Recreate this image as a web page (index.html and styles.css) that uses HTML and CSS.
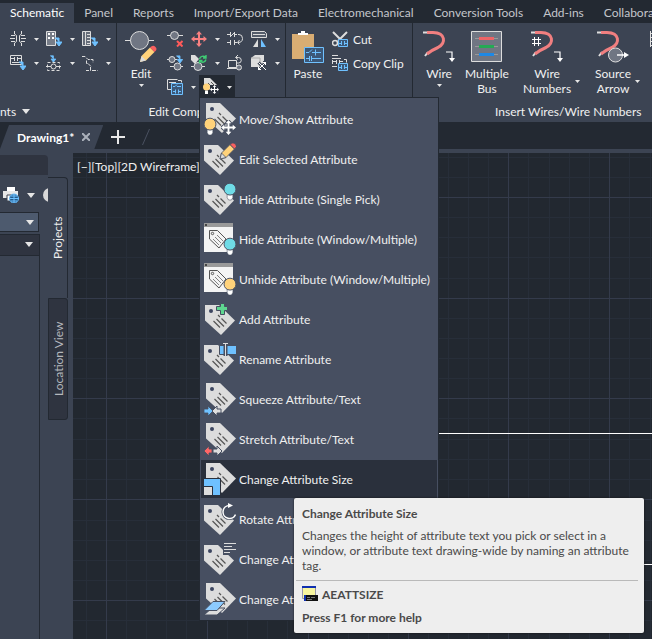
FILE: index.html
```html
<!doctype html>
<html lang="en">
<head>
	<meta charset="UTF-8">
	<title>Schematic</title>
	<link rel="stylesheet" href="styles.css">
</head>
<body>
	<!-- shared icon shapes -->
	<svg class="sprite" width="0" height="0" aria-hidden="true">
		<symbol id="down" viewBox="0 0 5 3"><path d="M0 0h5L2.500 3z" fill="#e6e6e6"/></symbol>
		<symbol id="tag" viewBox="0 0 30 30" overflow="visible">
			<path d="M0 0h14l16 15.500L16 30 0 15.500z" fill="#dcdcdc"/>
			<circle cx="6" cy="6" r="2" fill="#3c4560"/>
			<path d="M8.500 16l6.500 6.500M11.500 14l7.500 7.500M13 10l2 2M16.500 13.500l5 5" stroke="#555" stroke-width="1.200" fill="none"/>
		</symbol>
		<symbol id="bulb" viewBox="0 0 12 18" overflow="visible">
			<path d="M3 12h6v3.500L7.500 18h-3L3 15.500z" fill="#fff" stroke="#474f61" stroke-width=".6"/>
			<circle cx="6" cy="6.500" r="6.300" stroke="#474f61" stroke-width="1"/>
		</symbol>
		<symbol id="win" viewBox="0 0 32 32">
			<path d="M0 0h29v29H0z" fill="#f4f4f4"/><path d="M0 0h29v4H0z" fill="#999"/><path d="M1 1h2v2H1z" fill="#444"/>
			<path d="M5.500 7.500h8L22 16l-7 9-9.500-9z" fill="none" stroke="#555"/>
			<circle cx="8.500" cy="10.500" r="1.200" fill="none" stroke="#555"/>
			<path d="M9 16l6 6M11 14l6 6M13 12l6 6" stroke="#666" stroke-width=".8"/>
		</symbol>
		<symbol id="pencil" viewBox="0 0 16 16" overflow="visible">
			<path d="M0 16l1.500-6L10 1.500 14.500 6 6 14.500z" fill="#ffd27a"/><path d="M0 16l1.500-6L6 14.500z" fill="#dcdcdc"/>
			<path d="M10 1.500Q13-1.500 15.500 1T14.500 6z" fill="#f8605f"/>
		</symbol>
		<symbol id="board" viewBox="0 0 20 16">
			<path d="M.5.500h19v15H.5z" fill="#3c5878" stroke="#6fc1ff"/>
			<path d="M2 5.500h3l3-3M8 5.500h9M11.500 2.500v6M2 11.500h3M5.500 9v5M7.500 9v5M8 11.500h9" fill="none" stroke="#6fc1ff"/>
		</symbol>
		<symbol id="miniboard" viewBox="0 0 10 8">
			<path d="M.5.500h9v7h-9z" fill="#3c5878" stroke="#6fc1ff"/>
			<path d="M1 4.500h2.500M3.500 2v4M6.500 2v4M6.500 4.500H9" fill="none" stroke="#6fc1ff"/>
		</symbol>
		<symbol id="move" viewBox="0 0 16 16">
			<path d="M8 0l3 3.500H9V7h3.500V5L16 8l-3.500 3V9H9v3.500h2L8 16l-3-3.500h2V9H3.500v2L0 8l3.500-3v2H7V3.500H5z"/>
		</symbol>
		<symbol id="bluedown" viewBox="0 0 7 10"><path d="M0 1h4v4M1 5h6L4 9z" fill="#6fc1ff" stroke="#6fc1ff"/></symbol>
		<symbol id="wire" viewBox="0 0 32 32" overflow="visible">
			<path d="M0 1.500h5M2 25l3-4" stroke="#ddd" stroke-width="2"/>
			<path d="M4 1.500h6C23 2 23 12 15 16.500Q9 19 4 23" fill="none" stroke="#f17f80" stroke-width="3"/>
		</symbol>
		<symbol id="wirearrow" viewBox="0 0 10 12"><path d="M1 1h6v7" fill="none" stroke="#fff" stroke-width="1.200"/><path d="M4 7h6l-3 4z" fill="#fff"/></symbol>
	</svg>

	<nav class="tabs">
		<a class="active" href="#">Schematic</a>
		<a href="#">Panel</a>
		<a href="#">Reports</a>
		<a href="#">Import/Export Data</a>
		<a href="#">Electromechanical</a>
		<a href="#">Conversion Tools</a>
		<a href="#">Add-ins</a>
		<a href="#">Collaborate</a>
	</nav>

	<div class="ribbon">
		<section class="panel insert">
			<div class="tools">
				<div class="row">
					<button class="tool" aria-label="Icon menu"><svg width="16" height="16" fill="none" stroke="#ddd"><path d="M0 7.500h5M11 7.500h5M4.500 0v3l2 1.500v6l-2 1.500v3M11.500 0v3l-2 1.500v6l2 1.500v3M1 4.500h4M11 4.500h4M1 10.500h4M11 10.500h4"/></svg></button>
					<button class="drop" aria-label="More"><svg><use href="#down"/></svg></button>
					<button class="tool" aria-label="Catalog"><svg width="16" height="16"><path d="M.5.500h9v14h-9z" fill="#777d88" stroke="#ddd"/><path d="M2 2h2v2H2zM6 2h2v2H6zM2 6h2v2H2zM6 6h2v2H6z" fill="#fff"/><use href="#bluedown" x="9" y="6" width="7" height="10"/></svg></button>
					<button class="drop" aria-label="More"><svg><use href="#down"/></svg></button>
					<button class="tool" aria-label="Terminal"><svg width="16" height="16"><path d="M.5.500h8v14h-8z" fill="#666d79" stroke="#ddd"/><path d="M3.500 0v15" stroke="#ddd"/><path d="M5 3.500h3M5 6.500h3M5 9.500h3M5 12.500h3" stroke="#ddd"/><use href="#bluedown" x="9" y="6" width="7" height="10"/></svg></button>
					<button class="drop" aria-label="More"><svg><use href="#down"/></svg></button>
				</div>
				<div class="row">
					<button class="tool" aria-label="Circuit"><svg width="16" height="16"><path d="M.5.500h11v9H.5zM0 3.500h4M4.500 2v4M7.500 2v4M8 3.500h3M2 7.500h8" fill="none" stroke="#ddd"/><use href="#bluedown" x="9" y="6" width="7" height="10"/></svg></button>
					<button class="drop" aria-label="More"><svg><use href="#down"/></svg></button>
					<button class="tool" aria-label="Multiple"><svg width="16" height="16"><use href="#bluedown" x="4" y="0" width="6" height="8"/><path d="M1.500 7.500h12v8h-12z" fill="none" stroke="#ddd" stroke-dasharray="3 2"/><circle cx="7.500" cy="11.500" r="2.500" fill="none" stroke="#ddd"/><path d="M0 11.500h5M10 11.500h5" stroke="#ddd"/></svg></button>
					<button class="drop" aria-label="More"><svg><use href="#down"/></svg></button>
					<button class="tool" aria-label="Link"><svg width="16" height="16" fill="none" stroke="#ddd"><path d="M0 1.500h3l3 3h5v3M4.500 5.500v3h2M6 8.500l3 3M4 15.500h3M8.500 12v3.500h7" stroke-dasharray="4 1"/></svg></button>
					<button class="drop" aria-label="More"><svg><use href="#down"/></svg></button>
				</div>
			</div>
			<h2>nts <svg class="caret"><use href="#down"/></svg></h2>
		</section>

		<section class="panel edit">
			<div class="tools-wide">
				<button class="big w-edit">
					<svg width="32" height="32"><path d="M0 9.500h6M24 9.500h5" stroke="#ddd"/><circle cx="14.500" cy="9.500" r="9" fill="#707683" stroke="#ddd"/><use href="#pencil" x="15" y="15" width="16" height="16"/></svg>
					<span>Edit</span>
					<svg class="arrow"><use href="#down"/></svg>
				</button>
				<div class="tools">
					<div class="row">
						<button class="tool" aria-label="Delete component"><svg width="16" height="16"><path d="M0 4.500h16" stroke="#ddd"/><circle cx="7.500" cy="4.500" r="4" fill="#707683" stroke="#ddd"/><path d="M10 10l5.500 5.500M15.500 10L10 15.500" stroke="#ff5a5a" stroke-width="2"/></svg></button>
						<button class="tool" aria-label="Move component"><svg width="16" height="16" fill="#f98080"><use href="#move"/></svg></button>
						<button class="drop" aria-label="More"><svg><use href="#down"/></svg></button>
						<button class="tool" aria-label="Toggle NO/NC"><svg width="16" height="16" fill="none" stroke="#ddd"><path d="M0 3.500h3M3.500 1v5M7.500 1v5M3 6l5-5M8 3.500h2M0 11.500h3M3.500 9v5M7.500 9v5M8 11.500h2M11 3.500h1q3.500 0 3.500 4T11 11.500M12.500 9L10.500 11.500l2 2"/></svg></button>
						<button class="tool" aria-label="Scoot"><svg width="16" height="16"><path d="M.5.500h13l2 2v4H.5z" fill="#555d6b" stroke="#ddd"/><path d="M2 3.500h12" stroke="#ddd"/><path d="M7 8v8H2z" fill="#ddd"/><path d="M10 8v8h5z" fill="#6fc1ff"/></svg></button>
						<button class="drop" aria-label="More"><svg><use href="#down"/></svg></button>
					</div>
					<div class="row">
						<button class="tool" aria-label="Copy component"><svg width="16" height="16"><path d="M0 4.500h10M3 11.500h13" stroke="#ddd"/><circle cx="5" cy="4.500" r="3" fill="#707683" stroke="#ddd"/><circle cx="10.500" cy="11.500" r="3.500" fill="#707683" stroke="#ddd"/><use href="#bluedown" x="9" y="0" width="7" height="9"/></svg></button>
						<button class="tool" aria-label="Swap block"><svg width="16" height="16"><path d="M0 0h4l4 4-4 5-4-4z" fill="#ddd"/><path d="M0 11.500h14" stroke="#ddd"/><circle cx="7" cy="11.500" r="4" fill="#707683" stroke="#ddd"/><path d="M8.500 4a3.500 3.500 0 0 1 6-1.500M15 4.500a3.500 3.500 0 0 1-6 1.500M15 0v3h-3M8.500 8.500v-3h3" fill="none" stroke="#3fcc74" stroke-width="1.400"/></svg></button>
						<button class="drop" aria-label="More"><svg><use href="#down"/></svg></button>
						<button class="tool" aria-label="Reverse"><svg width="16" height="16" fill="none" stroke="#ddd"><path d="M1.500 5.500h8v7h-8zM0 13.500h10M9 2.500h2.500a2.500 2.500 0 0 1 0 5.500h-2M11 0L8.500 2.500l2.500 2"/><circle cx="12" cy="12.500" r="2.500" fill="#707683"/></svg></button>
						<button class="tool" aria-label="Explode"><svg width="16" height="16"><path d="M0 3l4-3h9v8l-4 4H0z" fill="#ddd"/><path d="M0 3h9v9" fill="none" stroke="#aaa"/><path d="M7.500 7.500l7.500 7.500M15 7l-8 8M12 7.500h2.500v2.500M7.500 12v2.500h2.500" stroke="#3c4453" stroke-width="3" fill="none"/><path d="M7.500 7.500l7.500 7.500M15 7l-8 8M12 7.500h2.500v2.500M7.500 12v2.500h2.500" stroke="#fff" fill="none"/></svg></button>
						<button class="drop" aria-label="More"><svg><use href="#down"/></svg></button>
					</div>
					<div class="row">
						<button class="tool" aria-label="Copy circuit"><svg width="16" height="16"><path d="M.5.500h10M.5.500v10H4M2 3.500h7M11 1.500h3.500v2" fill="none" stroke="#ddd"/><path d="M4.500 4.500h11v11h-11z" fill="#3c5878" stroke="#6fc1ff"/><path d="M6 7.500h2l2-2M10 7.500h4M6 12.500h2M8.500 10.500v4M11.500 10.500v4M12 12.500h2" fill="none" stroke="#6fc1ff"/></svg></button>
						<button class="drop" aria-label="More"><svg><use href="#down"/></svg></button>
						<div class="split">
							<button class="tool on" aria-label="Move/Show Attribute"><svg width="16" height="16"><path d="M1 0h6l8 8-6 6-8-8z" fill="#ddd"/><path d="M5 5l4 4M8 4l4 4" stroke="#555"/><circle cx="3.500" cy="9" r="3.500" fill="#ffd27a"/><path d="M2 12.500h3V16H2z" fill="#fff"/><path d="M7 7h9v9H7z" fill="#2a303c"/><g fill="#fff"><use href="#move" x="7" y="7" width="9" height="9"/></g></svg></button>
							<button class="drop" aria-label="More attribute tools"><svg><use href="#down"/></svg></button>

							<!-- attribute drop-down -->
							<ul class="menu">
								<li><button><svg width="32" height="32"><use href="#tag" x="2" y="0" width="30" height="30"/><use href="#bulb" x="0" y="15" width="12" height="17" fill="#ffd27a"/><g fill="#fff" stroke="#474f61" stroke-width="2" paint-order="stroke"><use href="#move" x="17" y="17" width="15" height="15"/></g></svg>Move/Show Attribute</button></li>
								<li><button><svg width="32" height="32"><use href="#tag" x="0" y="2" width="30" height="30"/><g stroke="#474f61" stroke-width=".8"><use href="#pencil" x="16" y="0" width="16" height="16"/></g></svg>Edit Selected Attribute</button></li>
								<li><button><svg width="32" height="32"><use href="#tag" x="0" y="2" width="30" height="30"/><use href="#bulb" x="20" y="0" width="12" height="17" fill="#6fdbe6"/></svg>Hide Attribute (Single Pick)</button></li>
								<li><button><svg width="32" height="32"><use href="#win"/><use href="#bulb" x="20" y="15" width="12" height="17" fill="#6fdbe6"/></svg>Hide Attribute (Window/Multiple)</button></li>
								<li><button><svg width="32" height="32"><use href="#win"/><use href="#bulb" x="20" y="15" width="12" height="17" fill="#ffd27a"/></svg>Unhide Attribute (Window/Multiple)</button></li>
								<li><button><svg width="32" height="32"><use href="#tag" x="1" y="2" width="30" height="30"/><path d="M16.500.500h4v3h3v4h-3v4h-4v-4h-4v-4h4z" fill="#5ed790" stroke="#474f61"/></svg>Add Attribute</button></li>
								<li><button><svg width="32" height="32"><use href="#tag" x="0" y="2" width="30" height="30"/><path d="M15.500 2.500H33v9H15.500z" fill="#6fc1ff" stroke="#474f61"/><path d="M21.500 0v14" stroke="#474f61" stroke-width="4"/><path d="M19 .5h5M21.500 0v14M19 13.500h5" stroke="#ddd"/></svg>Rename Attribute</button></li>
								<li><button><svg width="32" height="32"><use href="#tag" x="2" y="0" width="30" height="30"/><path d="M0 26h4v-3l5 5-5 5v-3H0z" fill="#6fc1ff" stroke="#474f61" stroke-width=".8"/><path d="M17 26h-4v-3l-5 5 5 5v-3h4z" fill="#ddd" stroke="#474f61"/></svg>Squeeze Attribute/Text</button></li>
								<li><button><svg width="32" height="32"><use href="#tag" x="2" y="0" width="30" height="30"/><path d="M8 26H5v-3l-5 5 5 5v-3h3z" fill="#ff6666" stroke="#474f61" stroke-width=".8"/><path d="M9 26h4v-3l5 5-5 5v-3H9z" fill="#ddd" stroke="#474f61"/></svg>Stretch Attribute/Text</button></li>
								<li class="current"><button><svg width="32" height="32"><use href="#tag" x="2" y="0" width="30" height="30"/><path d="M-.5 15.500h17v17h-17z" fill="#6fc1ff" stroke="#2a303c"/><path d="M-.5 23.500h9v9h-9z" fill="#ddd" stroke="#2a303c"/></svg>Change Attribute Size</button>
									<div class="tip" role="tooltip">
										<h3>Change Attribute Size</h3>
										<p>Changes the height of attribute text you pick or select in a window, or attribute text drawing-wide by naming an attribute tag.</p>
										<hr>
										<div class="cmd"><svg width="16" height="16"><path d="M.5.500h13v12H.5z" fill="#f8f6a0" stroke="#99a"/><path d="M0 0h14v2H0z" fill="#1030b0"/><path d="M3 9h13v6H3z" fill="#111"/><path d="M2 9h2v6H2z" fill="#1030b0"/><path d="M5 11.500h3M9 11.500h4M5 13.500h5" stroke="#777"/></svg>AEATTSIZE</div>
										<div class="help">Press F1 for more help</div>
									</div>
								</li>
								<li><button><svg width="32" height="32"><use href="#tag" x="0" y="2" width="30" height="30"/><circle cx="25.500" cy="9" r="8" fill="#474f61"/><path d="M25 2.500a6.500 6.500 0 1 0 6.500 9" fill="none" stroke="#fff" stroke-width="1.500"/><path d="M24 0l5 2.500-5 2.500z" fill="#fff"/></svg>Rotate Attribute</button></li>
								<li><button><svg width="32" height="32"><use href="#tag" x="0" y="2" width="30" height="30"/><path d="M19 0h13v12H19z" fill="#474f61"/><path d="M20 .5h12M20 3.500h8M20 6.500h12M20 9.500h6" stroke="#ddd"/></svg>Change Attribute Justification</button></li>
								<li><button><svg width="32" height="32"><use href="#tag" x="2" y="0" width="30" height="30"/><path d="M0 32l8-7h13l-8 7z" fill="#ddd" stroke="#474f61"/><path d="M0 27.500l9-9h12l-8 9z" fill="#8ccbff" stroke="#474f61"/></svg>Change Attribute Layer</button></li>
							</ul>
						</div>
					</div>
				</div>
			</div>
			<h2>Edit Components <svg class="caret"><use href="#down"/></svg></h2>
		</section>

		<section class="panel clip">
			<div class="tools-wide">
				<button class="big">
					<svg width="32" height="32"><path d="M0 3h22v25H0z" fill="#d9ad73"/><path d="M6 4V2h3V0h4v2h3v2z" fill="#fff"/><use href="#board" x="12" y="16" width="20" height="16"/></svg>
					<span>Paste</span>
				</button>
				<div class="tools">
					<button class="text"><svg width="16" height="16"><path d="M1 1l8 8M15 1L6 10" stroke="#ddd" stroke-width="2"/><circle cx="3" cy="12" r="2.500" fill="none" stroke="#ddd" stroke-width="1.500"/><use href="#miniboard" x="6" y="8" width="10" height="8"/></svg>Cut</button>
					<button class="text"><svg width="16" height="16" fill="none" stroke="#ddd"><path d="M0 .5h6M0 3.500h9M.5 5v4M4.500 5v4M7.500 5v3M0 6.500h4M8 6.500h3M12 4.500h2.500v3M0 11.500h5"/><use href="#miniboard" x="6" y="8" width="10" height="8"/></svg>Copy Clip</button>
				</div>
			</div>
		</section>

		<section class="panel wires">
			<div class="tools-wide">
				<button class="big">
					<svg width="32" height="32"><use href="#wire" width="32" height="32"/><use href="#wirearrow" x="22" y="20" width="10" height="12"/></svg>
					<span>Wire</span>
					<svg class="arrow"><use href="#down"/></svg>
				</button>
				<button class="big w-bus">
					<svg width="32" height="32"><path d="M.5.500h30v30H.5z" fill="#707683" stroke="#ddd"/><path d="M4 7.500h23M4 15.500h23M4 23.500h23" stroke="#999"/><path d="M8 7.500h15" stroke="#ec6466" stroke-width="3"/><path d="M8 15.500h15" stroke="#25a954" stroke-width="3"/><path d="M8 23.500h15" stroke="#1e88e5" stroke-width="3"/></svg>
					<span>Multiple<br>Bus</span>
				</button>
				<button class="side w-num">
					<svg width="32" height="32"><use href="#wire" width="32" height="32"/><path d="M3.500 6v9M7.500 6v9M1 8.500h9M1 12.500h9" stroke="#fff"/><use href="#wirearrow" x="22" y="20" width="10" height="12"/></svg>
					<span>Wire<br>Numbers</span>
					<svg class="arrow"><use href="#down"/></svg>
				</button>
				<button class="side w-src">
					<svg width="32" height="32"><use href="#wire" width="32" height="32"/><circle cx="18.500" cy="24" r="7" fill="#707683" stroke="#ddd"/><path d="M20 24h8" stroke="#fff" stroke-width="1.500"/><path d="M27 21l5 3-5 3z" fill="#fff"/></svg>
					<span>Source<br>Arrow</span>
					<svg class="arrow"><use href="#down"/></svg>
				</button>
				<button class="tool last" aria-label="Ladder"><svg width="16" height="16"><path d="M.5 0v16M15.500 0v16M0 2.500h16M0 6.500h16M0 10.500h16M0 14.500h16" stroke="#ddd"/></svg></button>
			</div>
			<h2>Insert Wires/Wire Numbers</h2>
		</section>
	</div>

	<div class="files">
		<div class="file"><span>Drawing1*</span><button aria-label="Close"><svg width="8" height="8"><path d="M0 0l8 8M8 0L0 8" stroke="#aab0ba" stroke-width="2"/></svg></button></div>
		<button class="new" aria-label="New drawing"><svg width="14" height="14"><path d="M7 0v14M0 7h14" stroke="#e8e8e8" stroke-width="2"/></svg></button>
		<svg width="8" height="16"><path d="M7.500 0L.5 16" stroke="#4a5160"/></svg>
	</div>

	<main>
		<aside>
			<div class="manager">
				<div class="cap"></div>
				<div class="print">
					<svg width="16" height="16"><path d="M4 0h8v4H4z" fill="#fff"/><path d="M0 4h15v7H0z" fill="#e8e8e8"/><path d="M4 8h8v6H4z" fill="#fff" stroke="#3c4453"/><circle cx="11" cy="11.500" r="4.500" fill="#225b8c" stroke="#6fc1ff"/><path d="M7 11.500h9M11 7v9M8 9h6M8 14h6" stroke="#6fc1ff"/></svg>
					<svg class="caret"><use href="#down"/></svg>
					<svg width="5" height="14"><circle cx="7" cy="7" r="7" fill="#d8d8d8"/></svg>
				</div>
				<div class="pick light"><select aria-label="Project"><option></option></select><svg class="caret"><use href="#down"/></svg></div>
				<div class="pick dark"><select aria-label="Projects"><option></option></select><svg class="caret"><use href="#down"/></svg></div>
				<div class="tree"></div>
			</div>
			<div class="sidetabs">
				<button class="projects">Projects</button>
				<button class="location">Location View</button>
			</div>
		</aside>
		<div class="canvas">
			<svg class="grid" aria-hidden="true" fill="none">
				<path class="minor" d="M13.500 0v900M53.500 0v900M73.500 0v900M93.500 0v900M113.500 0v900M154.500 0v900M174.500 0v900M194.500 0v900M214.500 0v900M255.500 0v900M275.500 0v900M295.500 0v900M315.500 0v900M355.500 0v900M375.500 0v900M395.500 0v900M415.500 0v900M455.500 0v900M476.500 0v900M496.500 0v900M516.500 0v900M556.500 0v900M577.500 0v900"/>
				<path class="minor" d="M0 4.500h1600M0 24.500h1600M0 64.500h1600M0 84.500h1600M0 104.500h1600M0 125.500h1600M0 165.500h1600M0 185.500h1600M0 205.500h1600M0 225.500h1600M0 265.500h1600M0 286.500h1600M0 306.500h1600M0 326.500h1600M0 367.500h1600M0 387.500h1600M0 407.500h1600M0 427.500h1600M0 467.500h1600"/>
				<path class="major" d="M33.500 0v900M134.500 0v900M235.500 0v900M335.500 0v900M435.500 0v900M536.500 0v900M0 44.500h1600M0 145.500h1600M0 245.500h1600M0 346.500h1600M0 447.500h1600"/>
				<!-- wires -->
				<path d="M300 280.500h1600M300 411.500h1600" stroke="#fff"/>
			</svg>
			<span class="view">[−][Top][2D Wireframe]</span>
		</div>
	</main>
</body>
</html>
```
FILE: styles.css
```css
*{
	margin:0;
	padding:0;
	box-sizing:border-box;
}
body{
	display:flex;
	flex-direction:column;
	height:100vh;
	overflow:hidden;
	background:#3c4453;
	color:#f0f0f0;
	font:12px/15px Lato, "Open Sans", sans-serif;
}
ul{
	list-style:none;
}
a{
	color:inherit;
	text-decoration:none;
}
button{
	border:0;
	background:none;
	color:inherit;
	font:inherit;
}
svg{
	display:block;
	flex:none;
}
h2, h3{
	font-size:12px;
}
.sprite{
	position:absolute;
}
.caret{
	width:8px;
	height:5px;
}

/* ribbon tabs */
.tabs{
	display:flex;
	height:23px;
	padding-top:3px;
	background:#232932;
	overflow:hidden;
	white-space:nowrap;
}
.tabs a{
	flex:none;
	padding:0 10px;
	color:#c3c6cb;
	line-height:20px;
}
.tabs .active{
	background:#3c4453;
	color:#fff;
}

/* ribbon */
.ribbon{
	display:flex;
	height:99px;
}
.panel{
	display:flex;
	flex:none;
	flex-direction:column;
	justify-content:space-between;
	padding:4px 0 3px;
	border-right:1px solid #232932;
}
.panel h2{
	display:flex;
	justify-content:center;
	align-items:center;
	gap:6px;
	font-weight:normal;
	white-space:nowrap;
}
.insert{
	width:117px;
	padding-left:6px;
}
.insert h2{
	justify-content:flex-start;
	margin-left:-6px;
}
.edit{
	width:169px;
}
.clip{
	width:127px;
}
.wires{
	flex:1;
	min-width:0;
	overflow:hidden;
	border:0;
}
.wires h2{
	justify-content:flex-start;
	padding-left:82px;
}
.tools-wide{
	display:flex;
}
.row{
	display:flex;
	height:24px;
}
.tool, .drop{
	display:flex;
	flex:none;
	justify-content:center;
	align-items:center;
	width:24px;
	height:24px;
}
.drop{
	width:12px;
}
.drop svg, .arrow{
	width:5px;
	height:3px;
}
.big{
	display:flex;
	flex:none;
	flex-direction:column;
	align-items:center;
	gap:3px;
	width:44px;
	padding-top:4px;
	white-space:nowrap;
}
.side{
	display:grid;
	flex:none;
	align-content:start;
	justify-items:center;
	row-gap:3px;
	padding-top:4px;
	white-space:nowrap;
}
.side svg:first-child{
	grid-column:1;
}
.side .arrow{
	align-self:center;
}
.side span{
	grid-column:1;
}
.wires .tools-wide{
	padding-left:4px;
}
.w-edit{
	width:46px;
	padding-left:2px;
}
.w-bus{
	width:52px;
}
.w-num{
	grid-template-columns:52px 8px;
	margin-left:8px;
}
.w-src{
	grid-template-columns:40px 8px;
	margin-left:12px;
}
.last{
	margin-left:5px;
}
.text{
	display:flex;
	align-items:center;
	gap:5px;
	height:24px;
	padding-left:2px;
	white-space:nowrap;
}

/* split button and its menu */
.split{
	display:flex;
	position:relative;
	height:23px;
	background:#232932;
}
.on{
	height:22px;
}
.menu{
	position:absolute;
	z-index:2;
	top:22px;
	left:0;
	width:240px;
	padding-bottom:2px;
	border:1px solid #232932;
	background:#474f61;
}
.menu li{
	position:relative;
	margin:2px 1px 0;
}
.menu button{
	display:flex;
	align-items:center;
	gap:3px;
	width:100%;
	height:38px;
	padding-left:3px;
	white-space:nowrap;
}
.menu .current button{
	background:#2a303c;
}
.tip{
	position:absolute;
	z-index:3;
	top:38px;
	left:93px;
	width:350px;
	padding:8px;
	border-radius:2px;
	background:#eee;
	color:#4a4a4a;
	box-shadow:0 0 2px #111;
}
.tip p{
	margin:7px 0;
}
.tip hr{
	margin:0 -2px 5px -6px;
	border:0;
	border-top:1px solid #b9b9b9;
}
.cmd, .help{
	font-weight:bold;
}
.cmd{
	display:flex;
	align-items:center;
	gap:4px;
	margin-bottom:8px;
}

/* drawing tabs */
.files{
	display:flex;
	align-items:center;
	height:27px;
	padding-top:3px;
	background:#232932;
}
.file{
	display:flex;
	align-items:center;
	gap:8px;
	height:24px;
	padding:0 13px 0 17px;
	background:#3c4453;
	clip-path:polygon(9px 0, 100% 0, calc(100% - 9px) 100%, 0 100%);
	color:#fff;
	font-weight:bold;
}
.new{
	margin:0 17px 0 8px;
}

/* palette and drawing */
main{
	display:flex;
	flex:1;
	min-height:0;
	padding-top:4px;
}
aside{
	display:flex;
	width:73px;
}
.manager{
	display:flex;
	flex-direction:column;
	width:48px;
	padding-top:2px;
}
.cap{
	height:20px;
	border-radius:0 4px 0 0;
	background:#2f3440;
}
.print{
	display:flex;
	align-items:center;
	height:36px;
	padding:4px 0 0 3px;
	gap:8px;
}
.pick{
	position:relative;
	width:39px;
	height:20px;
	border:1px solid #232932;
	border-left:0;
}
.pick select{
	display:block;
	width:100%;
	height:100%;
	border:0;
	background:none;
	appearance:none;
}
.pick .caret{
	position:absolute;
	top:7px;
	right:4px;
	pointer-events:none;
}
.light{
	margin-top:1px;
	background:#4d5a6e;
}
.dark{
	width:40px;
	height:22px;
	margin-top:2px;
	background:#2f3440;
}
.dark .caret{
	right:6px;
}
.tree{
	flex:1;
	width:40px;
	border-right:1px solid #232932;
}
.sidetabs{
	display:flex;
	flex-direction:column;
	width:20px;
	padding-top:24px;
}
.sidetabs button{
	writing-mode:vertical-rl;
	transform:rotate(180deg);
	text-align:center;
}
.projects{
	height:121px;
	border:solid #232932;
	border-width:0 0 1px 1px;
	border-radius:0 0 0 4px;
}
.location{
	height:122px;
	border:1px solid #232932;
	border-radius:3px 0 0 3px;
	background:#2f3440;
	color:#b5b8bd;
}
.canvas{
	position:relative;
	flex:1;
	min-width:0;
	padding:6px 4px;
	overflow:hidden;
	background:#222830;
}
.grid{
	position:absolute;
	top:0;
	left:0;
	width:100%;
	height:100%;
}
.minor{
	stroke:#272e39;
}
.major{
	stroke:#343b4b;
}
.view{
	position:relative;
	white-space:nowrap;
}
```
